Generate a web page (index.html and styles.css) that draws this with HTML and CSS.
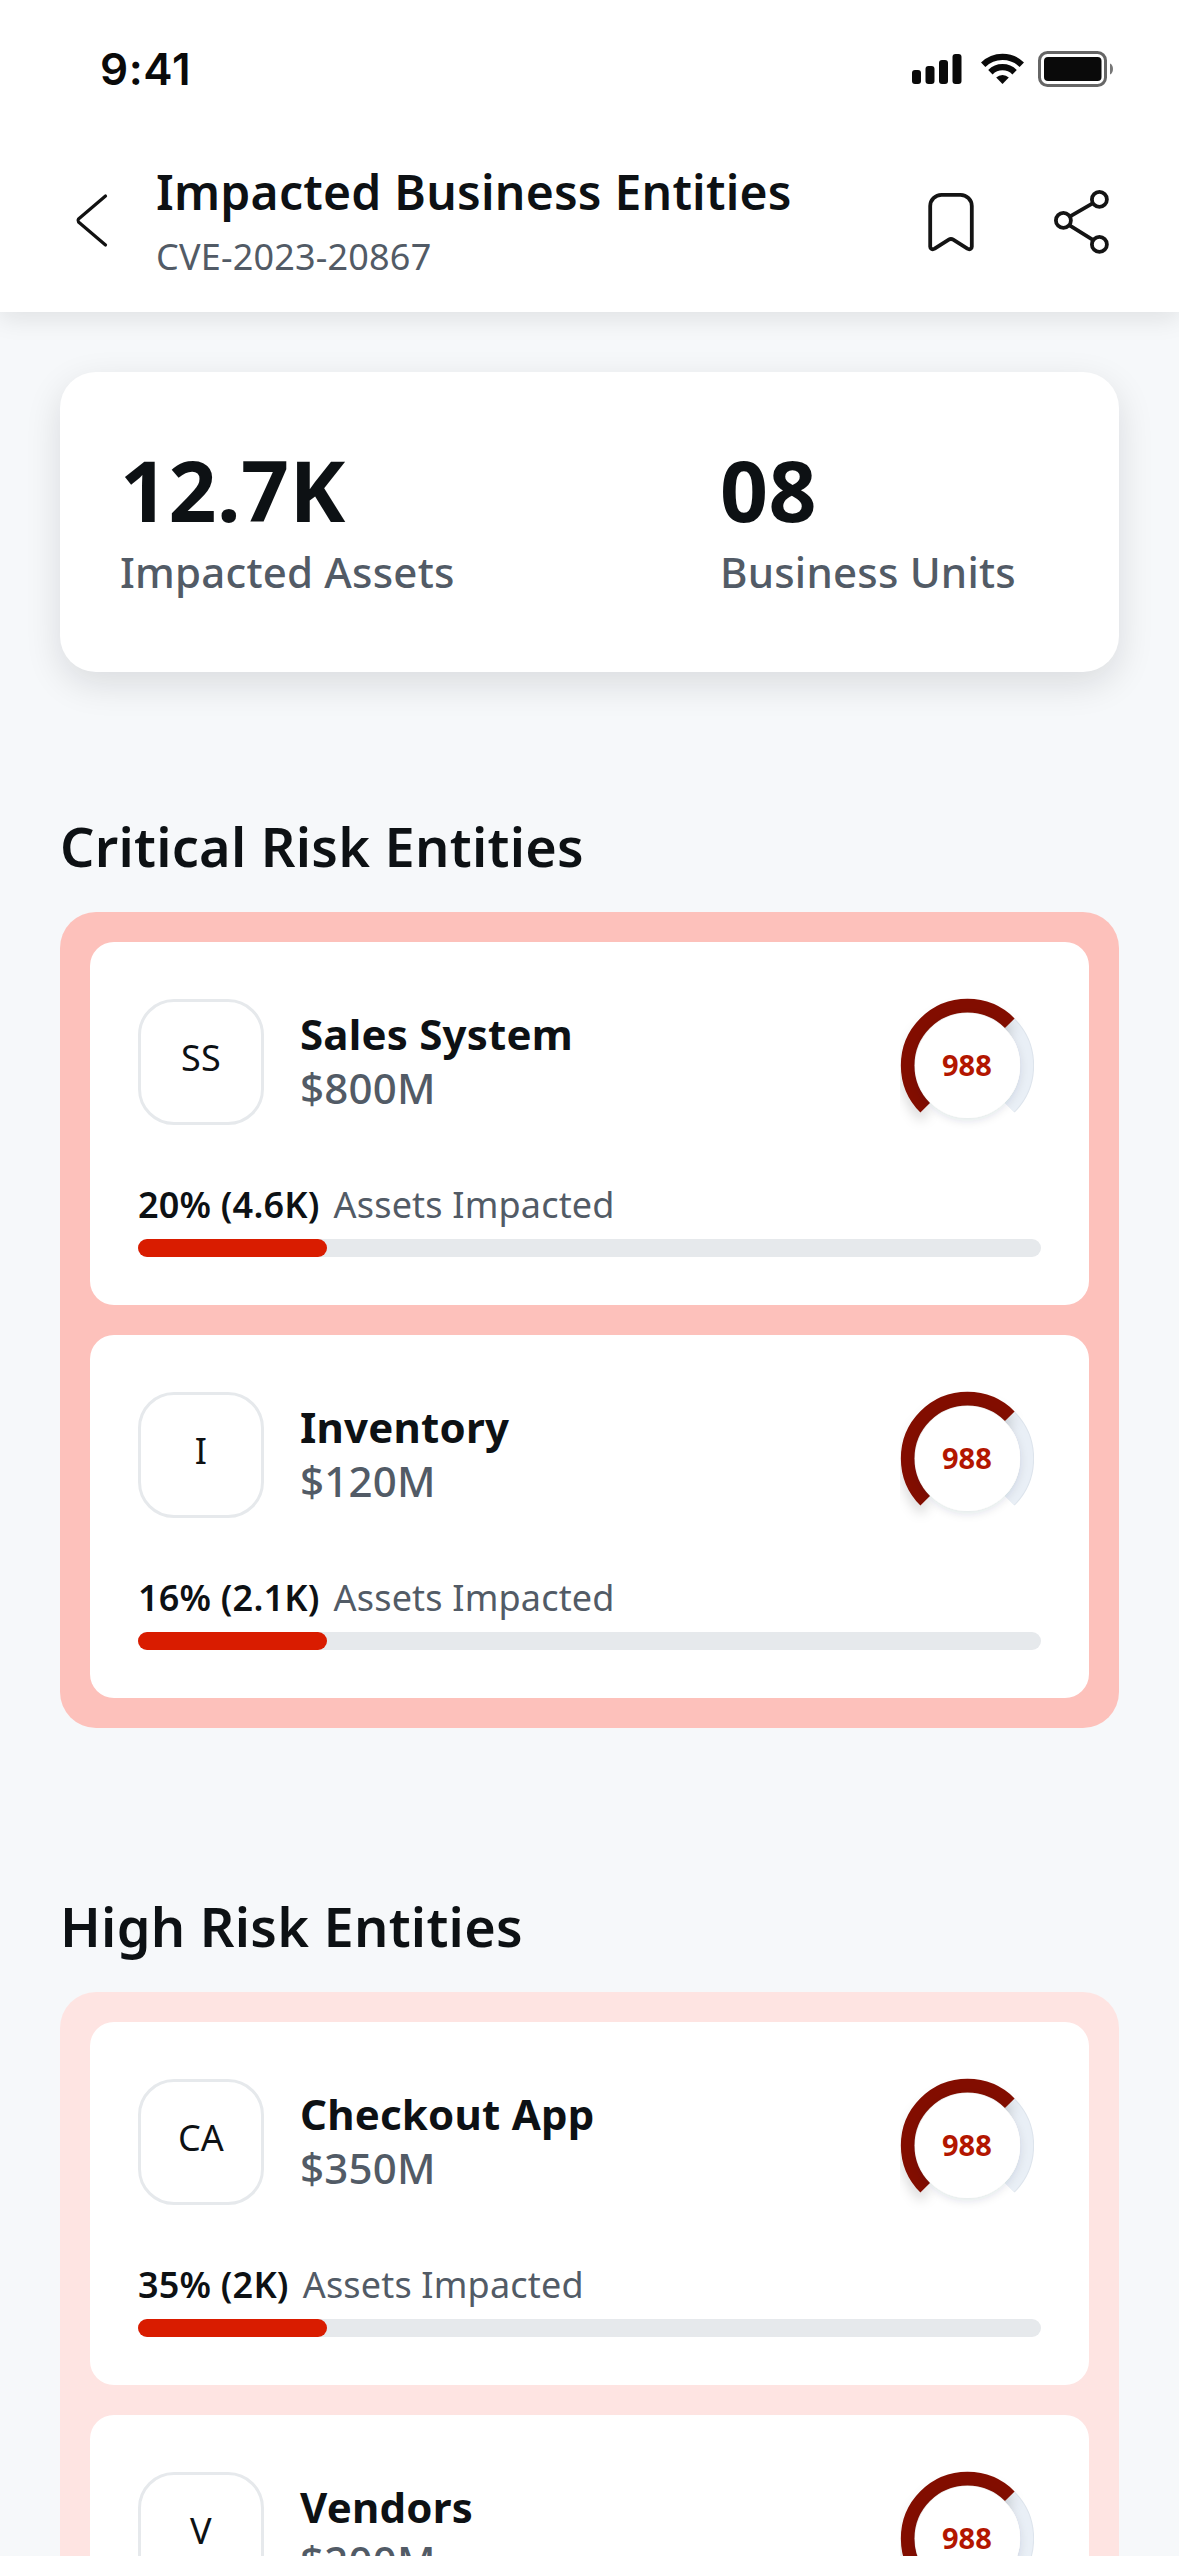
FILE: index.html
```html
<!DOCTYPE html>
<html lang="en">
<head>
<meta charset="utf-8">
<title>Impacted Business Entities</title>
<link rel="stylesheet" href="styles.css">
</head>
<body>
<svg class="defs" width="0" height="0" aria-hidden="true">
  <defs>
    <filter id="soft" x="-30%" y="-30%" width="160%" height="170%">
      <feDropShadow dx="0" dy="9" stdDeviation="6" flood-color="#101418" flood-opacity=".14"/>
    </filter>
    <filter id="disc" x="-30%" y="-30%" width="160%" height="170%">
      <feDropShadow dx="0" dy="3" stdDeviation="4" flood-color="#1c2c44" flood-opacity=".12"/>
    </filter>
    <symbol id="gauge" viewBox="-.5 -.5 134 134" overflow="visible">
      <path d="M109.300 24.700A59.800 59.800 0 0 1 109.300 109.300" fill="none" stroke="#dde4ec" stroke-width="13.600"/>
      <path d="M109 25A59.400 59.400 0 0 1 109 109" fill="none" stroke="#e9eff6" stroke-width="12.400"/>
      <path d="M24.700 109.300A59.800 59.800 0 1 1 109.300 24.700" fill="none" stroke="#821100" stroke-width="13.600" filter="url(#soft)"/>
      <circle cx="67" cy="67" r="52.500" fill="#fff" filter="url(#disc)"/>
    </symbol>
  </defs>
</svg>

<header class="header">
  <div class="status">
    <span class="time">9:41</span>
    <svg class="status-icons" width="204" height="38" viewBox="0 0 204 38">
      <g fill="#0a0a0a">
        <rect x="0" y="20" width="9" height="14" rx="3"/>
        <rect x="13.500" y="16" width="9" height="18" rx="3"/>
        <rect x="27" y="10" width="9" height="24" rx="3"/>
        <rect x="40.500" y="4" width="9" height="30" rx="3"/>
      </g>
      <g fill="none" stroke="#0a0a0a" stroke-width="6.200">
        <path d="M71.200 14.700A27.500 27.500 0 0 1 109.800 14.700"/>
        <path d="M78.400 22.200A17.200 17.200 0 0 1 102.600 22.200"/>
      </g>
      <path d="M90.500 34L84.200 27.600A9 9 0 0 1 96.800 27.600Z" fill="#0a0a0a"/>
      <rect x="127.500" y="2.500" width="66" height="33" rx="8" fill="none" stroke="#666" stroke-width="3"/>
      <rect x="132" y="7" width="57.500" height="24" rx="4" fill="#0a0a0a"/>
      <path d="M198 13.500C202 15 202 23 198 24.500Z" fill="#777"/>
    </svg>
  </div>
  <div class="nav">
    <svg class="back" width="72" height="72" viewBox="0 0 72 72" fill="none" stroke="#111" stroke-width="3.200" stroke-linecap="round" stroke-linejoin="round">
      <path d="M51.500 12L24.500 35Q23.400 36.500 24.500 38L51.500 61"/>
    </svg>
    <div class="titles">
      <h1 class="title">Impacted Business Entities</h1>
      <p class="subtitle">CVE-2023-20867</p>
    </div>
    <div class="actions">
      <svg width="72" height="72" viewBox="0 0 72 72" fill="none" stroke="#141414" stroke-width="3.800" stroke-linejoin="round">
        <path d="M26.500 8.800H45.500A11.300 11.300 0 0 1 56.800 20.100V60.700C56.800 63 54.500 63.900 52.400 62.700L38.200 53.700Q36 52.300 33.800 53.700L19.600 62.700C17.500 63.900 15.200 63 15.200 60.700V20.100A11.300 11.300 0 0 1 26.500 8.800Z"/>
      </svg>
      <svg width="72" height="72" viewBox="0 0 72 72" fill="none" stroke="#141414" stroke-width="3.800">
        <circle cx="54.400" cy="13.400" r="7.500"/>
        <circle cx="18.400" cy="34.400" r="7.500"/>
        <circle cx="54.400" cy="58.400" r="7.500"/>
        <path d="M25.100 30.400L47.600 17.400M24.600 39.400L47.900 53.900"/>
      </svg>
    </div>
  </div>
</header>

<main class="content">
  <section class="summary">
    <div class="stat"><div class="stat-value">12.7K</div><div class="stat-label">Impacted Assets</div></div>
    <div class="stat"><div class="stat-value">08</div><div class="stat-label">Business Units</div></div>
  </section>

  <section class="section">
    <h2 class="section-title">Critical Risk Entities</h2>
    <div class="group group-critical">
      <article class="card">
        <div class="card-top">
          <div class="avatar">SS</div>
          <div class="entity"><div class="name">Sales System</div><div class="value">$800M</div></div>
          <div class="gauge"><svg width="134" height="134"><use href="#gauge"/></svg><span class="score">988</span></div>
        </div>
        <div class="impact"><b>20% (4.6K)</b><span>Assets Impacted</span></div>
        <div class="track"><div class="fill"></div></div>
      </article>
      <article class="card">
        <div class="card-top">
          <div class="avatar">I</div>
          <div class="entity"><div class="name">Inventory</div><div class="value">$120M</div></div>
          <div class="gauge"><svg width="134" height="134"><use href="#gauge"/></svg><span class="score">988</span></div>
        </div>
        <div class="impact"><b>16% (2.1K)</b><span>Assets Impacted</span></div>
        <div class="track"><div class="fill"></div></div>
      </article>
    </div>
  </section>

  <section class="section">
    <h2 class="section-title">High Risk Entities</h2>
    <div class="group group-high">
      <article class="card">
        <div class="card-top">
          <div class="avatar">CA</div>
          <div class="entity"><div class="name">Checkout App</div><div class="value">$350M</div></div>
          <div class="gauge"><svg width="134" height="134"><use href="#gauge"/></svg><span class="score">988</span></div>
        </div>
        <div class="impact"><b>35% (2K)</b><span>Assets Impacted</span></div>
        <div class="track"><div class="fill"></div></div>
      </article>
      <article class="card">
        <div class="card-top">
          <div class="avatar">V</div>
          <div class="entity"><div class="name">Vendors</div><div class="value">$200M</div></div>
          <div class="gauge"><svg width="134" height="134"><use href="#gauge"/></svg><span class="score">988</span></div>
        </div>
      </article>
    </div>
  </section>
</main>
</body>
</html>
```
FILE: styles.css
```css
* { box-sizing: border-box; margin: 0; padding: 0; }

body {
  width: 1179px;
  height: 2556px;
  overflow: hidden;
  display: flex;
  flex-direction: column;
  background: #f6f8fa;
  color: #0d1114;
  font-family: "Noto Sans", sans-serif;
}
body * { letter-spacing: .005em; }

svg { display: block; flex: none; }
.defs { position: absolute; }

.header {
  flex: none;
  height: 312px;
  background: #fff;
  box-shadow: 0 6px 24px rgba(16, 20, 24, .1);
}

.status {
  height: 129px;
  padding: 50px 63px 0 100px;
  display: flex;
  justify-content: space-between;
  align-items: flex-start;
}
.status .time {
  font: 600 44px/38px Inter, sans-serif;
  letter-spacing: .6px;
  color: #0a0a0a;
}

.nav {
  display: flex;
  align-items: flex-start;
  padding: 30px 62px 0 54px;
}
.back { margin-top: 25px; }
.titles { flex: 1; margin-left: 30px; }
.title { font-size: 48px; line-height: 66px; font-weight: 600; margin-bottom: 5px; }
.subtitle { font-size: 36px; line-height: 54px; color: #525b66; }
.actions { display: flex; gap: 58px; margin-top: 27px; }

.content { padding: 60px; }

.summary {
  height: 300px;
  padding: 64px 60px 0;
  display: grid;
  grid-template-columns: 600px 1fr;
  background: #fff;
  border-radius: 36px;
  box-shadow: 0 12px 36px rgba(16, 20, 24, .12);
}
.stat-value { font-size: 84px; line-height: 108px; font-weight: 700; }
.stat-label { font-size: 42px; line-height: 55px; font-weight: 500; color: #525b66; white-space: nowrap; }

.section { margin-top: 138px; }
.section + .section { margin-top: 162px; }
.section-title { font-size: 54px; line-height: 72px; font-weight: 600; margin-bottom: 30px; }

.group {
  display: flex;
  flex-direction: column;
  gap: 30px;
  padding: 30px;
  border-radius: 36px;
}
.group-critical { background: #fdc1bb; }
.group-high { background: #fee4e2; }

.card {
  height: 363px;
  padding: 57px 48px 48px;
  background: #fff;
  border-radius: 24px;
}
.card-top { display: flex; height: 126px; }
.avatar {
  flex: none;
  width: 126px;
  height: 126px;
  padding-bottom: 10px;
  display: flex;
  align-items: center;
  justify-content: center;
  border: 3px solid #e6e9ec;
  border-radius: 36px;
  font-size: 36px;
}
.entity { flex: 1; padding: 8px 0 0 36px; font-size: 42px; line-height: 54px; }
.name { font-weight: 700; }
.value { font-weight: 500; color: #525b66; }

.gauge { display: grid; width: 134px; height: 134px; margin-right: 7px; margin-top: -1px; }
.gauge > * { grid-area: 1 / 1; }
.score {
  place-self: center;
  color: #b31600;
  font-size: 29px;
  line-height: 36px;
  font-weight: 700;
}

.impact { display: flex; gap: 14px; margin-top: 53px; font-size: 36px; line-height: 54px; }
.impact b { font-weight: 600; }
.impact span { color: #525b66; }

.track { height: 18px; margin-top: 7px; border-radius: 9px; background: #e6e9ec; }
.fill { width: 189px; height: 18px; border-radius: 9px; background: #d91c00; }
```
